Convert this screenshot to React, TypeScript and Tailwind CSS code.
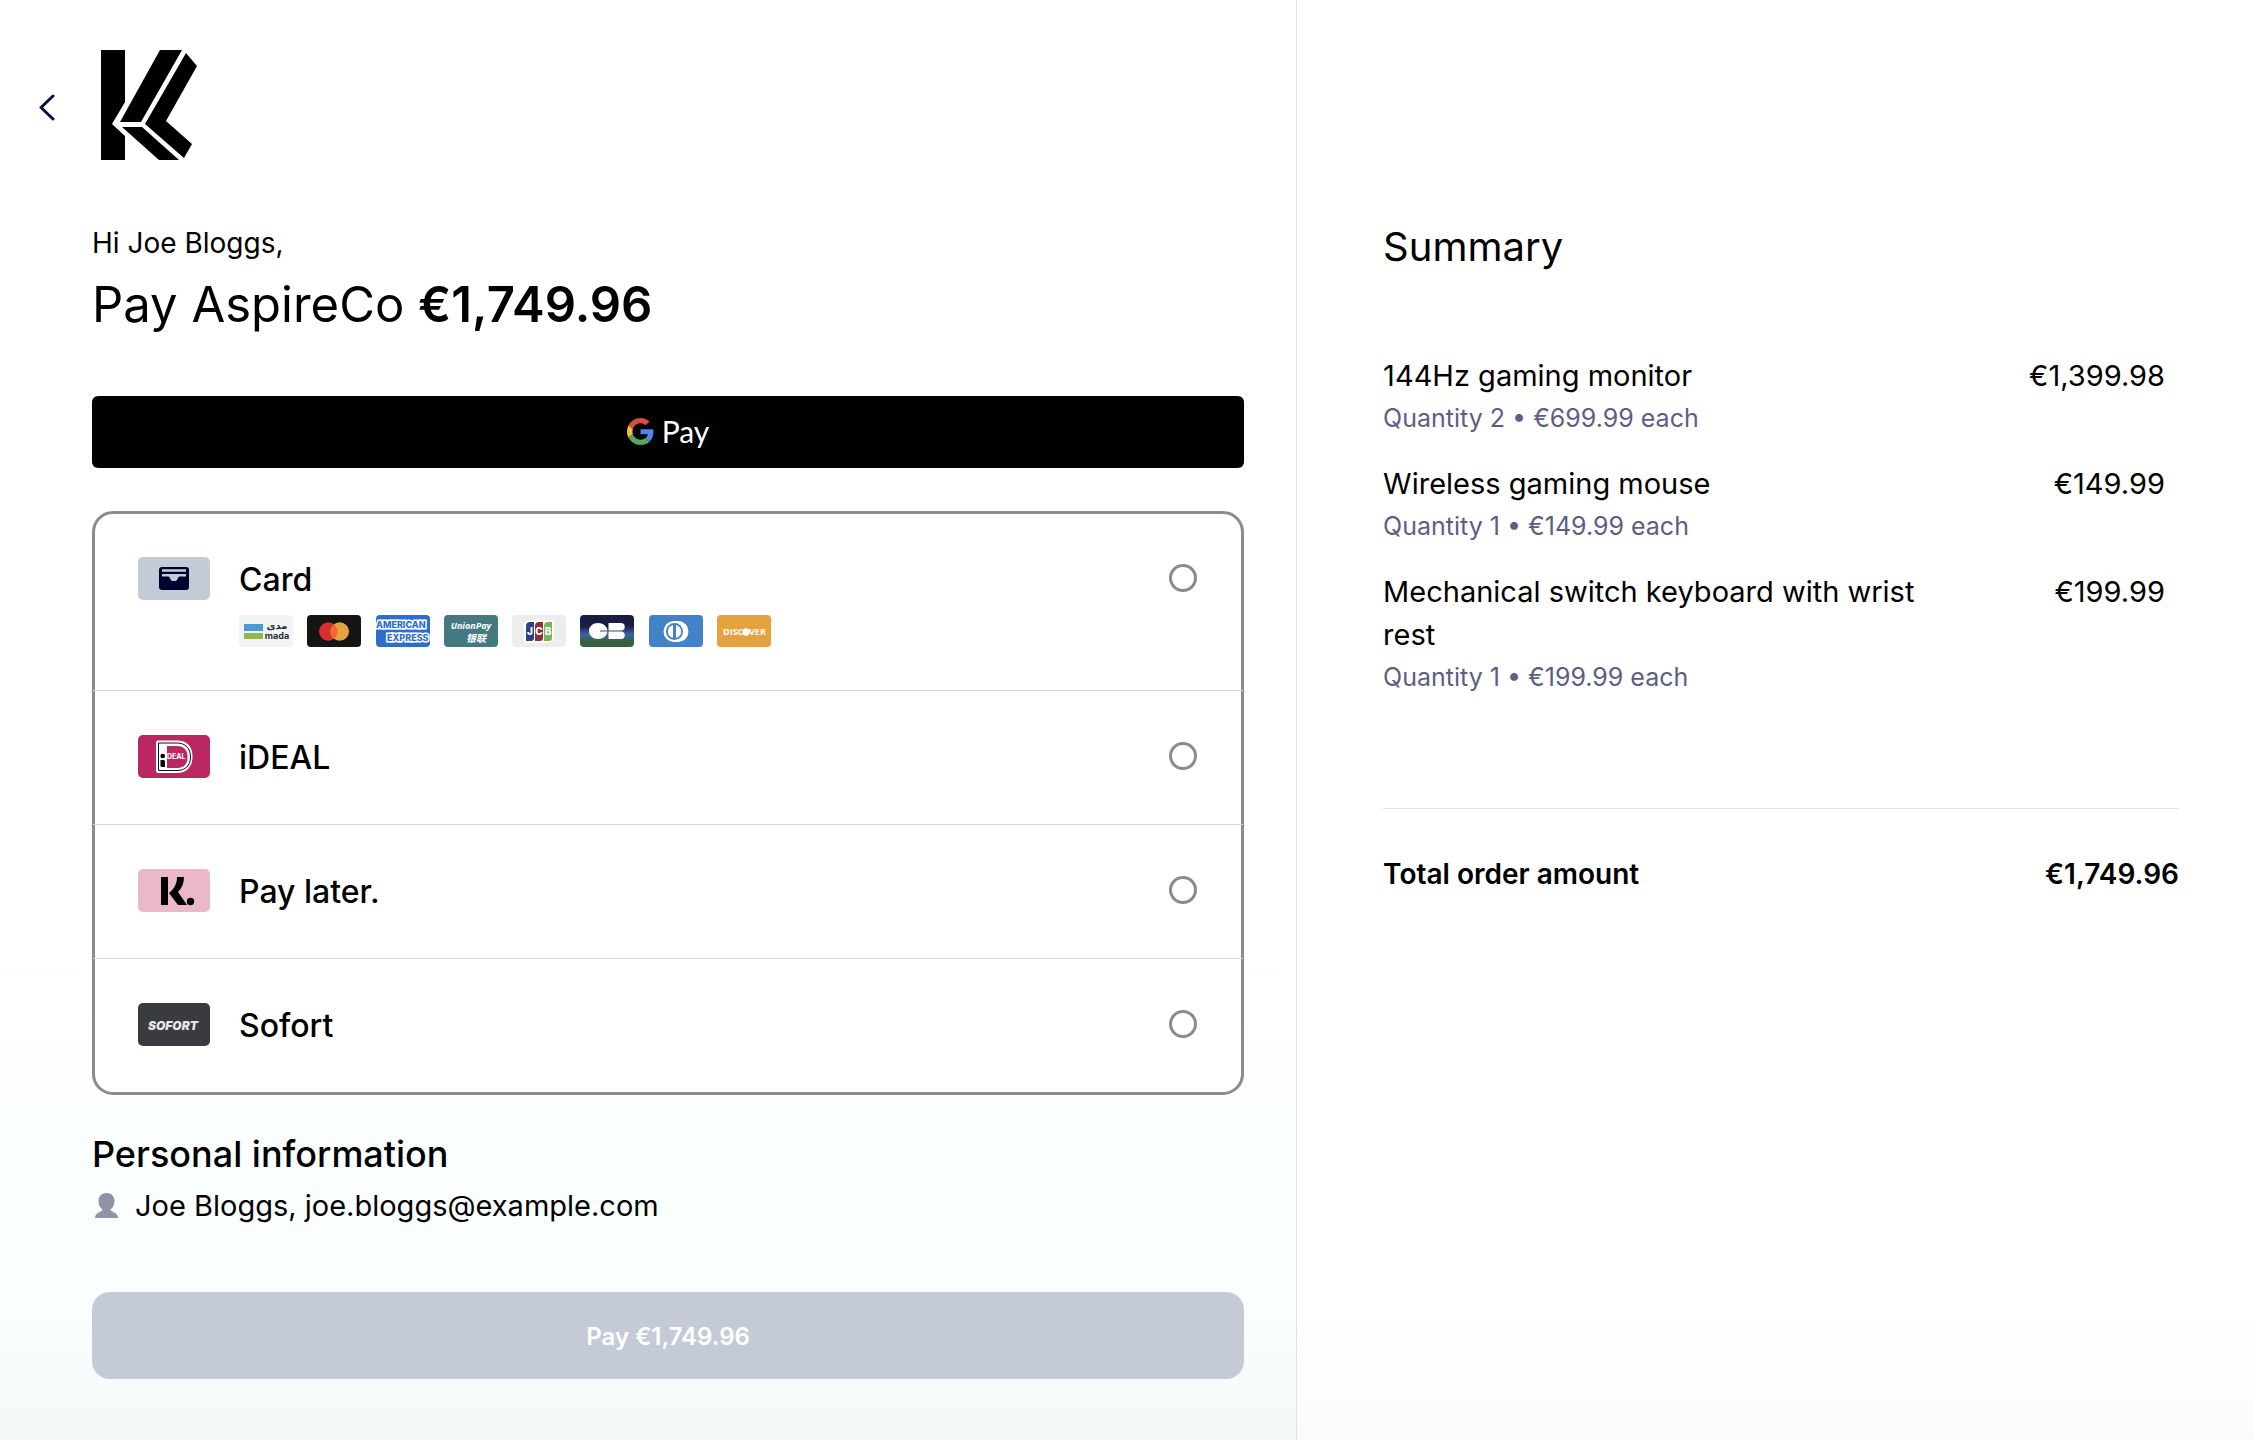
import type { ReactNode } from "react";

type Item = { name: string; detail: string; price: string };

const ITEMS: Item[] = [
  { name: "144Hz gaming monitor", detail: "Quantity 2 • €699.99 each", price: "€1,399.98" },
  { name: "Wireless gaming mouse", detail: "Quantity 1 • €149.99 each", price: "€149.99" },
  {
    name: "Mechanical switch keyboard with wrist rest",
    detail: "Quantity 1 • €199.99 each",
    price: "€199.99",
  },
];

/* ---------- Logos ---------- */

function MerchantLogo() {
  return (
    <svg width="96" height="110" viewBox="0 0 96 110" role="img" aria-label="AspireCo">
      <path d="M0 0h24v52L11 74l13 12v24H0z" />
      <path d="M59 0h22L40 72H19z" />
      <path d="M85 3l11 13-31 55 26 23-8 14-39-34z" />
      <path d="M21 77h20l37 33H58z" />
    </svg>
  );
}

function GoogleG() {
  return (
    <svg width="27" height="27" viewBox="0 0 48 48" aria-hidden="true">
      <path fill="#d94f3d" d="M24 9.5c3.5 0 6.7 1.2 9.2 3.6l6.9-6.9C35.9 2.4 30.5 0 24 0 14.6 0 6.5 5.4 2.6 13.2l8 6.2C12.4 13.7 17.7 9.5 24 9.5z" />
      <path fill="#5383ec" d="M47 24.6c0-1.6-.2-3.1-.4-4.6H24v9h12.9c-.6 3-2.2 5.5-4.8 7.2l7.7 6C44.4 38 47 32 47 24.6z" />
      <path fill="#f2bd42" d="M10.5 28.6c-.5-1.5-.8-3-.8-4.6s.3-3.1.8-4.6l-8-6.2C.9 16.5 0 20.1 0 24s.9 7.5 2.6 10.8z" />
      <path fill="#58a55c" d="M24 48c6.5 0 11.9-2.1 15.900-5.800l-7.700-6c-2.200 1.500-4.900 2.300-8.200 2.300-6.300 0-11.600-4.200-13.500-9.900l-8 6.200C6.500 42.600 14.600 48 24 48z" />
    </svg>
  );
}

function CardIcon() {
  return (
    <svg width="72" height="43" viewBox="0 0 72 43" aria-hidden="true">
      <rect width="72" height="43" rx="5" fill="#c5cbd6" />
      <rect x="21" y="10" width="30" height="23" rx="3" fill="#00002e" />
      <path d="M24 12.300h24v2.400H24zM24 17h24v2.500h-6.500c-1.500 0-2 4.500-4 4.500h-3c-2 0-2.500-4.500-4-4.500H24z" fill="#c5cbd6" />
    </svg>
  );
}

function IdealIcon() {
  return (
    <svg width="72" height="43" viewBox="0 0 72 43" aria-hidden="true">
      <rect width="72" height="43" rx="5" fill="#ba2762" />
      <path d="M20 5.500h19c10 0 15.500 6 15.500 16S49 38 39 38H20a2 2 0 0 1-2-2V7.500a2 2 0 0 1 2-2z" fill="#fff" />
      <path d="M20.500 8H39c8.500 0 13.500 5.500 13.500 14S47.500 35.500 39 35.500H20.500z" fill="none" stroke="#111" />
      <path d="M29 11h10c7 0 10.500 4 10.500 11S46 33 39 33H29z" fill="#ba2762" />
      <circle cx="24.700" cy="21" r="2.300" />
      <path d="M22.500 25h3a1.500 1.500 0 0 1 1.500 1.500V32h-3a1.500 1.500 0 0 1-1.500-1.500z" />
      <text x="29" y="24" fill="#fff" fontFamily="Inter, sans-serif" fontSize="7" fontWeight="700">DEAL</text>
    </svg>
  );
}

function KlarnaIcon() {
  return (
    <svg width="72" height="43" viewBox="0 0 72 43" aria-hidden="true">
      <rect width="72" height="43" rx="5" fill="#eab8c8" />
      <path d="M23 8h7v28h-7zM39 8h7c0 6-2 11-6 15l9 13h-9l-9-12c5-4 8-9 8-16z" />
      <circle cx="52.500" cy="32.500" r="3.700" />
    </svg>
  );
}

function SofortIcon() {
  return (
    <svg width="72" height="43" viewBox="0 0 72 43" aria-hidden="true">
      <rect width="72" height="43" rx="5" fill="#3a3b40" />
      <text x="35" y="27" textAnchor="middle" fill="#e6e6e6" fontFamily="Inter, sans-serif" fontSize="12" fontWeight="900" fontStyle="italic">SOFORT</text>
    </svg>
  );
}

function Badge({ label, fill, children }: { label: string; fill: string; children: ReactNode }) {
  return (
    <svg width="54" height="32" viewBox="0 0 54 32" role="img" aria-label={label} className="rounded">
      <rect width="54" height="32" fill={fill} />
      {children}
    </svg>
  );
}

function CardBrands() {
  return (
    <div className="flex w-[532px] justify-between">
      <Badge label="mada" fill="#f1f3f5">
        <path d="M5 9h19v7H5z" fill="#4b9ad4" />
        <path d="M5 18h19v6H5z" fill="#8fb84f" />
        <text x="38" y="14" textAnchor="middle" fill="#2b2f33" fontFamily="DejaVu Sans, sans-serif" fontSize="10" fontWeight="700">مدى</text>
        <text x="38" y="24" textAnchor="middle" fill="#2b2f33" fontFamily="Inter, sans-serif" fontSize="9" fontWeight="700">mada</text>
      </Badge>
      <Badge label="Mastercard" fill="#151613">
        <circle cx="21.300" cy="16.500" r="9.300" fill="#d92f2c" />
        <circle cx="32.700" cy="16.500" r="9.300" fill="#e8a240" />
        <path d="M27 9.200a9.300 9.300 0 0 1 0 14.600 9.300 9.300 0 0 1 0-14.600z" fill="#ec6b2d" />
      </Badge>
      <Badge label="American Express" fill="#2f6dca">
        <g fill="#2f6dca" stroke="#fff" strokeWidth="3" paintOrder="stroke" fontFamily="Inter, sans-serif" fontSize="9" fontWeight="800">
          <text x="0" y="13">AMERICAN</text>
          <text x="11" y="26">EXPRESS</text>
        </g>
      </Badge>
      <Badge label="UnionPay" fill="#467880">
        <g fill="#fff" fontWeight="700" fontStyle="italic">
          <text x="27" y="14" textAnchor="middle" fontFamily="Open Sans, sans-serif" fontSize="9">UnionPay</text>
          <text x="32" y="27" textAnchor="middle" fontFamily="Noto Sans CJK SC, sans-serif" fontSize="10">银联</text>
        </g>
      </Badge>
      <Badge label="JCB" fill="#ededed">
        <path d="M18 5h24v17a6 6 0 0 1-6 6H12V11a6 6 0 0 1 6-6z" fill="#fff" />
        <path d="M18 7h4v16a3 3 0 0 1-3 3h-5V11a4 4 0 0 1 4-4z" fill="#2d4284" />
        <path d="M27 7h4v16a3 3 0 0 1-3 3h-5V11a4 4 0 0 1 4-4z" fill="#8c3038" />
        <path d="M36 7h4v16a3 3 0 0 1-3 3h-5V11a4 4 0 0 1 4-4z" fill="#75b657" />
        <g fill="#fff" textAnchor="middle" fontFamily="Inter, sans-serif" fontSize="10" fontWeight="800">
          <text x="18" y="20">J</text>
          <text x="27" y="20">C</text>
          <text x="36" y="20">B</text>
        </g>
      </Badge>
      <Badge label="Cartes Bancaires" fill="url(#cb)">
        <defs>
          <linearGradient id="cb" x1="0" y1="0" x2="0" y2="1">
            <stop offset="0.35" stopColor="#1b1c44" />
            <stop offset="0.6" stopColor="#4062a8" />
            <stop offset="0.85" stopColor="#34613a" />
          </linearGradient>
        </defs>
        <path d="M18 8c5 0 9 3 9.500 7.500H20v1h7.500C27 21 23 24 18 24c-5 0-9-3.500-9-8s4-8 9-8zM28.500 8H41a3.700 3.700 0 0 1 0 7.500H28.500zM28.500 16.500H41a3.700 3.700 0 0 1 0 7.500H28.500z" fill="#fff" />
      </Badge>
      <Badge label="Diners Club" fill="#4282c6">
        <path d="M25 6h4a10.500 10.500 0 0 1 0 21h-4a10.500 10.500 0 0 1 0-21z" fill="#fff" />
        <circle cx="25.500" cy="16.500" r="8.500" fill="#4282c6" />
        <path d="M24 10a6.700 6.700 0 0 0 0 13zM27 10a6.700 6.700 0 0 1 0 13z" fill="#fff" />
      </Badge>
      <Badge label="Discover" fill="#e5a23c">
        <g fill="#fff" fontFamily="Open Sans, sans-serif" fontSize="9" fontWeight="700">
          <text x="6" y="20">DISC</text>
          <text x="32" y="20">VER</text>
        </g>
        <circle cx="29" cy="17" r="3.700" fill="#fff" />
      </Badge>
    </div>
  );
}

/* ---------- Payment methods ---------- */

const METHODS = [
  { id: "card", label: "Card", icon: <CardIcon />, extra: <CardBrands /> },
  { id: "ideal", label: "iDEAL", icon: <IdealIcon />, extra: null },
  { id: "klarna", label: "Pay later.", icon: <KlarnaIcon />, extra: null },
  { id: "sofort", label: "Sofort", icon: <SofortIcon />, extra: null },
];

function PaymentMethods() {
  return (
    <fieldset
      aria-label="Payment method"
      className="mt-[43px] rounded-[21px] border-3 border-[#8b8b8b] bg-white"
    >
      {METHODS.map((m) => (
        <label
          key={m.id}
          htmlFor={m.id}
          className="-mx-0.5 flex items-start border-b border-[#d6d6d6] py-11 pr-[46px] pl-[45px] first:py-[43px] last:border-b-0"
        >
          {m.icon}
          <span className="ml-[29px] flex flex-1 flex-col gap-[13px]">
            <span className="text-[32px] leading-[45px] font-medium">{m.label}</span>
            {m.extra}
          </span>
          <input
            id={m.id}
            type="radio"
            name="method"
            className="mt-[7px] size-7 appearance-none rounded-full border-3 border-[#8b8b8b] bg-white"
          />
        </label>
      ))}
    </fieldset>
  );
}

function Checkout() {
  return (
    <main className="border-r border-[#dfe2ea] bg-linear-to-b from-white from-65% via-[#f9fefe] via-90% to-[#f3f9f9] pr-[52px] pb-[60px]">
      <header className="flex items-center pt-[50px]">
        <button type="button" aria-label="Back" className="flex w-[101px] pt-1 pl-[37px]">
          <svg width="18" height="28" viewBox="0 0 18 28" fill="none" stroke="#0b1043" strokeWidth="3" strokeLinecap="round" strokeLinejoin="round">
            <path d="M16 3L4 14.500 16 26" />
          </svg>
        </button>
        <MerchantLogo />
      </header>

      <div className="pl-[92px]">
        <p className="mt-[61px] text-[28px] leading-11">Hi Joe Bloggs,</p>
        <h1 className="mt-2 text-[49px] leading-[64px]">
          Pay AspireCo <strong className="font-semibold">€1,749.96</strong>
        </h1>

        <button
          type="button"
          className="mt-[59px] flex h-[72px] w-full items-center justify-center gap-2 rounded-md bg-black pb-0.5 text-white"
        >
          <GoogleG />
          <span className="font-[Lato] text-[30px] leading-9">Pay</span>
        </button>

        <PaymentMethods />

        <h2 className="mt-9 text-[36px] leading-[46px] font-medium">Personal information</h2>
        <p className="mt-[7px] flex items-center text-[29px] leading-11">
          <svg width="43" height="26" viewBox="0 0 43 26" fill="#9293a8" aria-hidden="true">
            <path d="M14.500 0c5 0 8 3.500 8 8 0 4-1.500 6.500-4 8.500 0 2.500 7.500 2.500 7.500 8.500H3c0-6 7.500-6 7.500-8.500-2.500-2-4-4.500-4-8.500 0-4.500 3-8 8-8z" />
          </svg>
          Joe Bloggs, joe.bloggs@example.com
        </p>

        <button
          type="button"
          disabled
          className="mt-16 h-[87px] w-full rounded-[18px] bg-[#c5cbd6] pt-0.5 text-[24px] font-semibold text-white"
        >
          Pay €1,749.96
        </button>
      </div>
    </main>
  );
}

function Summary() {
  return (
    <aside className="bg-linear-to-b from-white from-90% to-[#fbfbfb] pt-[217px] pr-[75px] pl-[86px]">
      <h2 className="text-[40px] leading-[60px]">Summary</h2>
      <ul className="mt-[77px] flex flex-col gap-[22px] pr-[14px]">
        {ITEMS.map((item) => (
          <li key={item.name} className="flex items-start justify-between">
            <div className="w-[560px]">
              <p className="text-[29px] leading-[43px]">{item.name}</p>
              <p className="text-[25px] leading-[43px] text-[#5c5e83]">{item.detail}</p>
            </div>
            <span className="text-[29px] leading-[43px]">{item.price}</span>
          </li>
        ))}
      </ul>
      <div className="mt-[109px] flex justify-between border-t border-[#e4e4e8] pt-11 text-[28px] leading-[43px] font-semibold">
        <span>Total order amount</span>
        <span>€1,749.96</span>
      </div>
    </aside>
  );
}

export default function App() {
  return (
    <div className="grid min-h-screen grid-cols-[61fr_45fr] font-[Inter,sans-serif] text-black">
      <Checkout />
      <Summary />
    </div>
  );
}
